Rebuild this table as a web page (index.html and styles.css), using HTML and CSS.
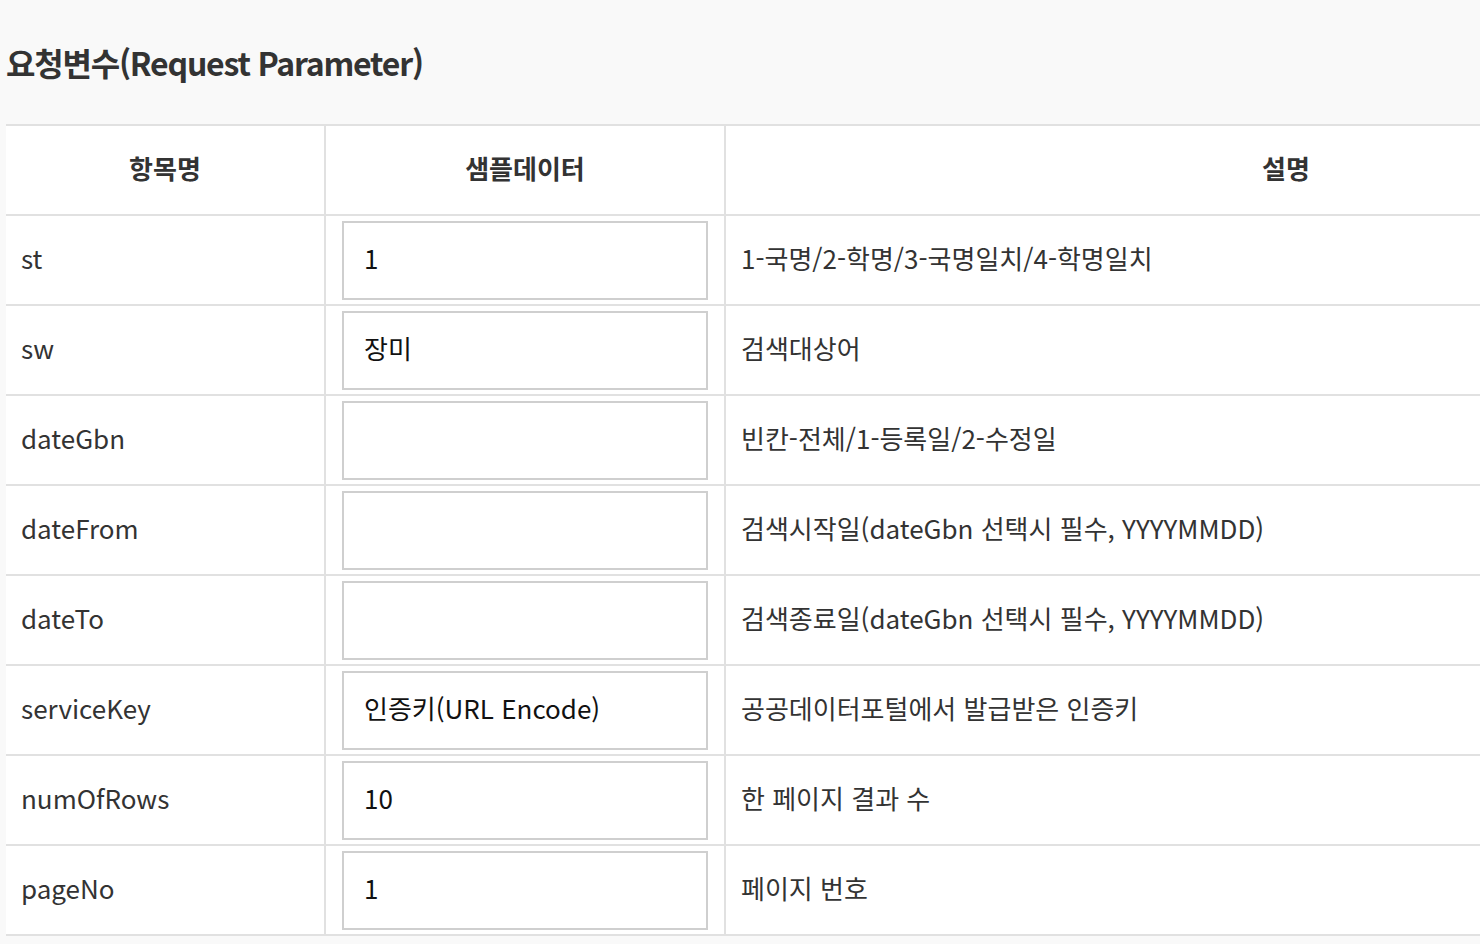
FILE: index.html
```html
<!DOCTYPE html>
<html lang="ko">
<head>
<meta charset="utf-8">
<title>요청변수</title>
<link rel="stylesheet" href="styles.css">
</head>
<body>
<div class="page">
  <h2 class="title">요청변수(Request Parameter)</h2>
  <table class="params">
    <colgroup>
      <col class="c-name">
      <col class="c-sample">
      <col class="c-desc">
    </colgroup>
    <thead>
      <tr>
        <th>항목명</th>
        <th>샘플데이터</th>
        <th class="last">설명</th>
      </tr>
    </thead>
    <tbody>
      <tr>
        <td>st</td>
        <td class="sample"><input class="field" type="text" value="1"></td>
        <td class="last">1-국명/2-학명/3-국명일치/4-학명일치</td>
      </tr>
      <tr>
        <td>sw</td>
        <td class="sample"><input class="field" type="text" value="장미"></td>
        <td class="last">검색대상어</td>
      </tr>
      <tr>
        <td>dateGbn</td>
        <td class="sample"><input class="field" type="text" value=""></td>
        <td class="last">빈칸-전체/1-등록일/2-수정일</td>
      </tr>
      <tr>
        <td>dateFrom</td>
        <td class="sample"><input class="field" type="text" value=""></td>
        <td class="last">검색시작일(dateGbn 선택시 필수, YYYYMMDD)</td>
      </tr>
      <tr>
        <td>dateTo</td>
        <td class="sample"><input class="field" type="text" value=""></td>
        <td class="last">검색종료일(dateGbn 선택시 필수, YYYYMMDD)</td>
      </tr>
      <tr>
        <td>serviceKey</td>
        <td class="sample"><input class="field" type="text" value="인증키(URL Encode)"></td>
        <td class="last">공공데이터포털에서 발급받은 인증키</td>
      </tr>
      <tr>
        <td>numOfRows</td>
        <td class="sample"><input class="field" type="text" value="10"></td>
        <td class="last">한 페이지 결과 수</td>
      </tr>
      <tr>
        <td>pageNo</td>
        <td class="sample"><input class="field" type="text" value="1"></td>
        <td class="last">페이지 번호</td>
      </tr>
    </tbody>
  </table>
</div>
</body>
</html>
```

FILE: styles.css
```css
html, body {
  margin: 0;
  padding: 0;
  background: #f9f9f9;
  overflow: hidden;
}

body {
  font-family: "Noto Sans CJK KR", "Noto Sans", sans-serif;
  color: #333;
}

.page {
  padding: 0 0 0 6px;
  width: 1900px;
}

.title {
  margin: 0;
  padding-top: 40px;
  height: 124px;
  box-sizing: border-box;
  font-size: 32px;
  line-height: 44px;
  font-weight: 700;
  letter-spacing: -1.2px;
  color: #333;
}

.params {
  border-collapse: separate;
  border-spacing: 0;
  background: #fff;
  border-top: 2px solid #e1e1e1;
  table-layout: fixed;
  width: 1840px;
}

.c-name { width: 320px; }
.c-sample { width: 400px; }
.c-desc { width: 1120px; }

.params th,
.params td {
  height: 84px;
  padding: 0 0 4px 0;
  border-bottom: 2px solid #e1e1e1;
  border-right: 2px solid #e1e1e1;
  vertical-align: middle;
  font-size: 26px;
  line-height: 32px;
  color: #333;
}

.params th {
  font-weight: 700;
  text-align: center;
  color: #333;
}

.params td {
  text-align: left;
  padding-left: 15px;
  font-weight: 400;
}

.params .last {
  border-right: none;
}

.params td.sample {
  padding: 0 16px;
  height: 88px;
}

.field {
  display: block;
  box-sizing: border-box;
  width: 366px;
  height: 79px;
  margin: 0;
  border: 2px solid #cfcfcf;
  border-radius: 0;
  background: #fff;
  padding: 0 0 5px 20px;
  font-family: "Noto Sans CJK KR", "Noto Sans", sans-serif;
  font-size: 26px;
  color: #111;
  outline: none;
}
```
